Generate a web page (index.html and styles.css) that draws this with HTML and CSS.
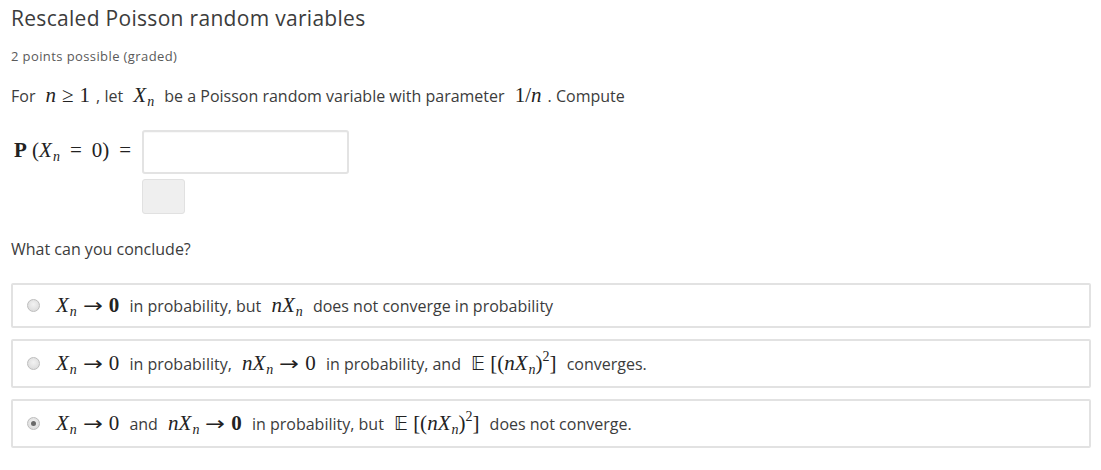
FILE: index.html
```html
<!DOCTYPE html>
<html>
<head>
<meta charset="utf-8">
<link rel="stylesheet" href="styles.css">
</head>
<body>
<div class="problem">
  <h2 class="title">Rescaled Poisson random variables</h2>
  <div class="points">2 points possible (graded)</div>
  <p class="stem">For <span class="m"><i>n</i><span class="op">≥</span><b class="num">1</b></span>, let <span class="m"><i>X</i><sub>n</sub></span> be a Poisson random variable with parameter <span class="m">1/<i>n</i></span>. Compute</p>
  <div class="answer-row">
    <div class="lhs m"><b>P</b> (<i>X</i><sub>n</sub><span class="op">=</span>0)<span class="op">=</span></div>
    <div class="answer-col">
      <div class="input"></div>
      <div class="btn"></div>
    </div>
  </div>
  <p class="question">What can you conclude?</p>
  <div class="options">
    <label class="option">
      <span class="radio"></span>
      <span class="otext"><span class="m"><i>X</i><sub>n</sub><span class="arr">→</span><b>0</b></span> in probability, but <span class="m"><i>nX</i><sub>n</sub></span> does not converge in probability</span>
    </label>
    <label class="option tall">
      <span class="radio"></span>
      <span class="otext"><span class="m"><i>X</i><sub>n</sub><span class="arr">→</span>0</span> in probability, <span class="m"><i>nX</i><sub>n</sub><span class="arr">→</span>0</span> in probability, and <span class="m"><span class="bb">𝔼</span> [(<i>nX</i><sub>n</sub>)<sup>2</sup>]</span> converges.</span>
    </label>
    <label class="option tall">
      <span class="radio checked"></span>
      <span class="otext"><span class="m"><i>X</i><sub>n</sub><span class="arr">→</span>0</span> and <span class="m"><i>nX</i><sub>n</sub><span class="arr">→</span><b>0</b></span> in probability, but <span class="m"><span class="bb">𝔼</span> [(<i>nX</i><sub>n</sub>)<sup>2</sup>]</span> does not converge.</span>
    </label>
  </div>
</div>
</body>
</html>
```
FILE: styles.css
```css
html, body {
  margin: 0;
  padding: 0;
  background: #fff;
}
body {
  font-family: "Open Sans", "Noto Sans", sans-serif;
  color: #3c3c3c;
}
.problem {
  padding: 0 11px;
}
.title {
  margin: 0;
  padding-top: 4px;
  font-size: 21px;
  letter-spacing: 0.3px;
  font-weight: 400;
  line-height: 28px;
  color: #3c3c3c;
}
.points {
  margin-top: 16px;
  font-size: 13px;
  letter-spacing: 0.4px;
  line-height: 16px;
  color: #5a5a5a;
}
.stem {
  margin: 20px 0 0;
  font-size: 16px;
  line-height: 22px;
}
.m {
  font-family: "Liberation Serif", "DejaVu Serif", serif;
  font-size: 21px;
  letter-spacing: 0;
  color: #222;
  white-space: nowrap;
  margin: 0 6px;
}
.m i {
  font-style: italic;
}
.m b.num {
  font-weight: 400;
}
.m sub {
  font-style: italic;
  font-size: 14px;
  vertical-align: -4px;
  line-height: 0;
  margin-left: 1px;
}
.m sup {
  font-size: 14px;
  vertical-align: 9px;
  line-height: 0;
}
.op {
  margin: 0 6px;
}
.arr {
  font-family: "DejaVu Sans", sans-serif;
  font-size: 19px;
  margin: 0 8px;
  display: inline-block;
  transform: scaleX(1.25);
}
.bb {
  font-family: "DejaVu Sans", sans-serif;
  font-size: 19px;
}
.answer-row {
  display: flex;
  align-items: flex-start;
  margin-top: 23px;
}
.lhs {
  margin: 8px 5px 0 3px;
  width: 123px;
  font-size: 21px;
  white-space: nowrap;
}
.lhs .op {
  margin: 0 10px;
}
.answer-col {
  display: flex;
  flex-direction: column;
  gap: 5px;
}
.input {
  width: 207px;
  height: 44px;
  border: 2px solid #e3e3e3;
  border-radius: 3px;
  box-sizing: border-box;
  box-shadow: inset 0 1px 1px rgba(0,0,0,0.03);
}
.btn {
  width: 43px;
  height: 35px;
  box-sizing: border-box;
  background: #efefef;
  border: 1px solid #e1e1e1;
  border-radius: 3px;
}
.question {
  margin: 24px 0 0;
  font-size: 16px;
  line-height: 22px;
}
.options {
  margin-top: 23px;
  display: flex;
  flex-direction: column;
  gap: 11px;
  width: 1080px;
}
.option {
  display: flex;
  align-items: center;
  height: 45px;
  box-sizing: border-box;
  border: 2px solid #e2e2e2;
  border-radius: 2px;
  padding-left: 14px;
  font-size: 16px;
}
.option.tall {
  height: 49px;
}
.radio {
  width: 11px;
  height: 11px;
  border-radius: 50%;
  border: 1px solid #bdbdbd;
  background: radial-gradient(circle at 50% 40%, #f2f2f2 0%, #d6d6d6 100%);
  flex-shrink: 0;
  position: relative;
}
.radio.checked::after {
  content: "";
  position: absolute;
  left: 3px;
  top: 3px;
  width: 5px;
  height: 5px;
  border-radius: 50%;
  background: #6a6a6a;
}
.otext {
  margin-left: 10px;
}
```
